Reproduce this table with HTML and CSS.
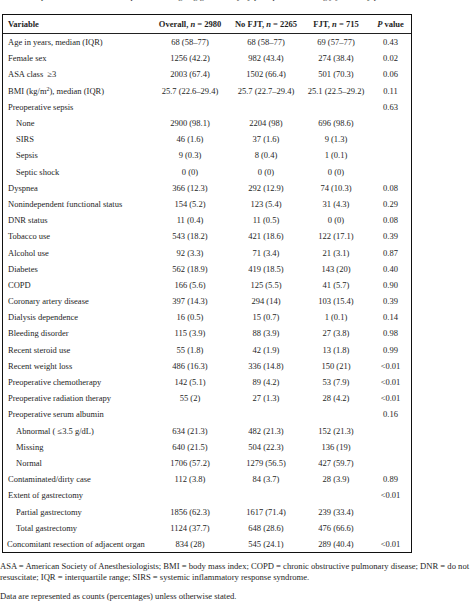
FILE: index.html
```html
<!DOCTYPE html>
<html>
<head>
<meta charset="utf-8">
<link rel="stylesheet" href="styles.css">
</head>
<body>
<div class="caption">Preoperative characteristics of patients undergoing gastrectomy by postoperative feeding jejunostomy placement</div>
<div class="tbl">
  <div class="row head">
    <div class="lab">Variable</div>
    <div class="c"><span>Overall, <i>n</i> = 2980</span></div>
    <div class="c">No FJT, <i>n</i> = 2265</div>
    <div class="c">FJT, <i>n</i> = 715</div>
    <div class="c"><i>P</i> value</div>
  </div>
  <div class="row"><div class="lab">Age in years, median (IQR)</div><div class="c">68 (58–77)</div><div class="c">68 (58–77)</div><div class="c">69 (57–77)</div><div class="c">0.43</div></div>
  <div class="row"><div class="lab">Female sex</div><div class="c">1256 (42.2)</div><div class="c">982 (43.4)</div><div class="c">274 (38.4)</div><div class="c">0.02</div></div>
  <div class="row"><div class="lab">ASA class &nbsp;≥3</div><div class="c">2003 (67.4)</div><div class="c">1502 (66.4)</div><div class="c">501 (70.3)</div><div class="c">0.06</div></div>
  <div class="row"><div class="lab">BMI (kg/m<sup>2</sup>), median (IQR)</div><div class="c">25.7 (22.6–29.4)</div><div class="c">25.7 (22.7–29.4)</div><div class="c">25.1 (22.5–29.2)</div><div class="c">0.11</div></div>
  <div class="row"><div class="lab">Preoperative sepsis</div><div class="c"></div><div class="c"></div><div class="c"></div><div class="c">0.63</div></div>
  <div class="row"><div class="lab sub">None</div><div class="c">2900 (98.1)</div><div class="c">2204 (98)</div><div class="c">696 (98.6)</div><div class="c"></div></div>
  <div class="row"><div class="lab sub">SIRS</div><div class="c">46 (1.6)</div><div class="c">37 (1.6)</div><div class="c">9 (1.3)</div><div class="c"></div></div>
  <div class="row"><div class="lab sub">Sepsis</div><div class="c">9 (0.3)</div><div class="c">8 (0.4)</div><div class="c">1 (0.1)</div><div class="c"></div></div>
  <div class="row"><div class="lab sub">Septic shock</div><div class="c">0 (0)</div><div class="c">0 (0)</div><div class="c">0 (0)</div><div class="c"></div></div>
  <div class="row"><div class="lab">Dyspnea</div><div class="c">366 (12.3)</div><div class="c">292 (12.9)</div><div class="c">74 (10.3)</div><div class="c">0.08</div></div>
  <div class="row"><div class="lab">Nonindependent functional status</div><div class="c">154 (5.2)</div><div class="c">123 (5.4)</div><div class="c">31 (4.3)</div><div class="c">0.29</div></div>
  <div class="row"><div class="lab">DNR status</div><div class="c">11 (0.4)</div><div class="c">11 (0.5)</div><div class="c">0 (0)</div><div class="c">0.08</div></div>
  <div class="row"><div class="lab">Tobacco use</div><div class="c">543 (18.2)</div><div class="c">421 (18.6)</div><div class="c">122 (17.1)</div><div class="c">0.39</div></div>
  <div class="row"><div class="lab">Alcohol use</div><div class="c">92 (3.3)</div><div class="c">71 (3.4)</div><div class="c">21 (3.1)</div><div class="c">0.87</div></div>
  <div class="row"><div class="lab">Diabetes</div><div class="c">562 (18.9)</div><div class="c">419 (18.5)</div><div class="c">143 (20)</div><div class="c">0.40</div></div>
  <div class="row"><div class="lab">COPD</div><div class="c">166 (5.6)</div><div class="c">125 (5.5)</div><div class="c">41 (5.7)</div><div class="c">0.90</div></div>
  <div class="row"><div class="lab">Coronary artery disease</div><div class="c">397 (14.3)</div><div class="c">294 (14)</div><div class="c">103 (15.4)</div><div class="c">0.39</div></div>
  <div class="row"><div class="lab">Dialysis dependence</div><div class="c">16 (0.5)</div><div class="c">15 (0.7)</div><div class="c">1 (0.1)</div><div class="c">0.14</div></div>
  <div class="row"><div class="lab">Bleeding disorder</div><div class="c">115 (3.9)</div><div class="c">88 (3.9)</div><div class="c">27 (3.8)</div><div class="c">0.98</div></div>
  <div class="row"><div class="lab">Recent steroid use</div><div class="c">55 (1.8)</div><div class="c">42 (1.9)</div><div class="c">13 (1.8)</div><div class="c">0.99</div></div>
  <div class="row"><div class="lab">Recent weight loss</div><div class="c">486 (16.3)</div><div class="c">336 (14.8)</div><div class="c">150 (21)</div><div class="c">&lt;0.01</div></div>
  <div class="row"><div class="lab">Preoperative chemotherapy</div><div class="c">142 (5.1)</div><div class="c">89 (4.2)</div><div class="c">53 (7.9)</div><div class="c">&lt;0.01</div></div>
  <div class="row"><div class="lab">Preoperative radiation therapy</div><div class="c">55 (2)</div><div class="c">27 (1.3)</div><div class="c">28 (4.2)</div><div class="c">&lt;0.01</div></div>
  <div class="row"><div class="lab">Preoperative serum albumin</div><div class="c"></div><div class="c"></div><div class="c"></div><div class="c">0.16</div></div>
  <div class="row"><div class="lab sub">Abnormal ( ≤3.5 g/dL)</div><div class="c">634 (21.3)</div><div class="c">482 (21.3)</div><div class="c">152 (21.3)</div><div class="c"></div></div>
  <div class="row"><div class="lab sub">Missing</div><div class="c">640 (21.5)</div><div class="c">504 (22.3)</div><div class="c">136 (19)</div><div class="c"></div></div>
  <div class="row"><div class="lab sub">Normal</div><div class="c">1706 (57.2)</div><div class="c">1279 (56.5)</div><div class="c">427 (59.7)</div><div class="c"></div></div>
  <div class="row"><div class="lab">Contaminated/dirty case</div><div class="c">112 (3.8)</div><div class="c">84 (3.7)</div><div class="c">28 (3.9)</div><div class="c">0.89</div></div>
  <div class="row"><div class="lab">Extent of gastrectomy</div><div class="c"></div><div class="c"></div><div class="c"></div><div class="c">&lt;0.01</div></div>
  <div class="row"><div class="lab sub">Partial gastrectomy</div><div class="c">1856 (62.3)</div><div class="c">1617 (71.4)</div><div class="c">239 (33.4)</div><div class="c"></div></div>
  <div class="row"><div class="lab sub">Total gastrectomy</div><div class="c">1124 (37.7)</div><div class="c">648 (28.6)</div><div class="c">476 (66.6)</div><div class="c"></div></div>
  <div class="row"><div class="lab last">Concomitant resection of adjacent organ</div><div class="c">834 (28)</div><div class="c">545 (24.1)</div><div class="c">289 (40.4)</div><div class="c">&lt;0.01</div></div>
</div>
<div class="notes">
  <p class="note">ASA = American Society of Anesthesiologists; BMI = body mass index; COPD = chronic obstructive pulmonary disease; DNR = do not resuscitate; IQR = interquartile range; SIRS = systemic inflammatory response syndrome.</p>
  <p class="note">Data are represented as counts (percentages) unless otherwise stated.</p>
</div>
</body>
</html>
```
FILE: styles.css
```css
html, body {
  margin: 0;
  padding: 0;
  background: #fff;
}
body {
  font-family: "Liberation Serif", "Times New Roman", serif;
  color: #1e1e1e;
  width: 474px;
  overflow: hidden;
}
.caption {
  height: 10px;
  margin-top: -9px;
  font-size: 8.5px;
  line-height: 10px;
  text-align: center;
  white-space: nowrap;
  padding-right: 40px;
}
.tbl {
  margin: 13px 0 0 2px;
  width: 408px;
  border: 1px solid #111;
  font-size: 8.5px;
}
.row {
  display: grid;
  grid-template-columns: 147px 80px 72px 68px 41px;
  height: 16.2px;
  align-items: center;
  line-height: 10px;
}
.row.head {
  height: 18px;
  border-bottom: 1px solid #222;
  font-weight: bold;
}
.lab {
  padding-left: 5px;
  white-space: nowrap;
}
.lab.sub {
  padding-left: 13px;
}
.lab.last {
  padding-left: 4px;
}
.c {
  text-align: center;
  white-space: nowrap;
}
sup {
  font-size: 6px;
  line-height: 0;
  vertical-align: 3px;
}
.notes {
  margin: 8px 0 0 0;
  width: 478px;
  font-size: 8.6px;
  line-height: 11px;
}
.note {
  margin: 0 0 8px 0;
}
```
